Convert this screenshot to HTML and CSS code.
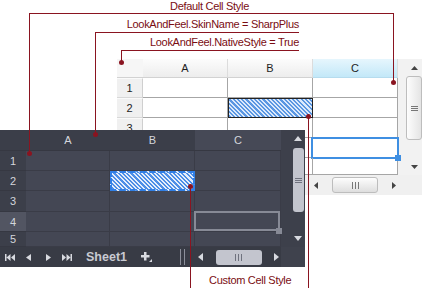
FILE: index.html
```html
<!DOCTYPE html>
<html lang="en">
<head>
    <meta charset="UTF-8">
    <title>Spreadsheet LookAndFeel</title>
    <link rel="stylesheet" href="styles.css">
</head>
<body>

<div class="canvas">

    <!-- native style sheet, in the back -->
    <div class="sheet light">
        <div class="hd corner"></div>
        <div class="hd">A</div>
        <div class="hd">B</div>
        <div class="hd active">C</div>
        <div class="vscroll">
            <svg class="arr" width="7" height="4" viewBox="0 0 7 4"><path d="M0 4L3.5 0L7 4z"/></svg>
            <div class="thumb"><span class="grip-v"></span></div>
            <svg class="arr down" width="7" height="4" viewBox="0 0 7 4"><path d="M0 0L7 0L3.5 4z"/></svg>
        </div>

        <div class="rh">1</div><div class="cell"></div><div class="cell"></div><div class="cell"></div>
        <div class="rh">2</div><div class="cell"></div><div class="cell hatch"></div><div class="cell"></div>
        <div class="rh">3</div><div class="cell"></div><div class="cell"></div><div class="cell"></div>
        <div class="rh">4</div><div class="cell"></div><div class="cell"></div><div class="cell focus"></div>
        <div class="rh">5</div><div class="cell"></div><div class="cell"></div><div class="cell"></div>

        <div class="foot">
            <div class="tabs"></div>
            <div class="hscroll">
                <svg class="arr" width="4" height="7" viewBox="0 0 4 7"><path d="M4 0L0 3.5L4 7z"/></svg>
                <div class="thumb"><span class="grip-h"></span></div>
                <svg class="arr" width="4" height="7" viewBox="0 0 4 7"><path d="M0 0L4 3.5L0 7z"/></svg>
            </div>
        </div>
        <div class="box"></div>
    </div>

    <!-- SharpPlus skin sheet, in front -->
    <div class="sheet dark">
        <div class="hd corner"></div>
        <div class="hd">A</div>
        <div class="hd">B</div>
        <div class="hd active">C</div>
        <div class="vscroll">
            <svg class="arr" width="8" height="5" viewBox="0 0 8 5"><path d="M0 5L4 0L8 5z"/></svg>
            <div class="thumb"><span class="grip-v"></span></div>
            <svg class="arr down" width="8" height="5" viewBox="0 0 8 5"><path d="M0 0L8 0L4 5z"/></svg>
        </div>

        <div class="rh">1</div><div class="cell"></div><div class="cell"></div><div class="cell"></div>
        <div class="rh">2</div><div class="cell"></div><div class="cell hatch"></div><div class="cell"></div>
        <div class="rh">3</div><div class="cell"></div><div class="cell"></div><div class="cell"></div>
        <div class="rh active">4</div><div class="cell"></div><div class="cell"></div><div class="cell focus"></div>
        <div class="rh">5</div><div class="cell"></div><div class="cell"></div><div class="cell"></div>

        <div class="foot">
            <div class="tabs">
                <svg class="nav" width="10" height="7" viewBox="0 0 10 7"><path d="M0 0h1.5v7H0zM5.5 0v7L1.5 3.5zM10 0v7L6 3.5z"/></svg>
                <svg class="nav" width="5" height="7" viewBox="0 0 5 7"><path d="M5 0v7L0 3.5z"/></svg>
                <svg class="nav" width="5" height="7" viewBox="0 0 5 7"><path d="M0 0v7L5 3.5z"/></svg>
                <svg class="nav" width="10" height="7" viewBox="0 0 10 7"><path d="M0 0v7L4 3.5zM4.5 0v7L8.5 3.5zM8.5 0H10v7H8.5z"/></svg>
                <span class="tab">Sheet1</span>
                <svg class="add" width="11" height="10" viewBox="0 0 11 10"><path d="M3 0h2.5v3h3v2.5h-3v3H3v-3H0V3h3z"/><path d="M8 10h3V7z"/></svg>
            </div>
            <div class="split"></div>
            <div class="hscroll">
                <svg class="arr" width="5" height="8" viewBox="0 0 5 8"><path d="M5 0L0 4L5 8z"/></svg>
                <div class="thumb"><span class="grip-h"></span></div>
                <svg class="arr" width="5" height="8" viewBox="0 0 5 8"><path d="M0 0L5 4L0 8z"/></svg>
            </div>
        </div>
        <div class="box"></div>
    </div>

    <!-- callouts -->
    <div class="note n-default">Default Cell Style</div>
    <div class="ln l-def-top"></div>
    <div class="ln l-def-left"></div>
    <div class="ln l-def-right"></div>
    <div class="dot d-def-left"></div>
    <div class="dot d-def-right"></div>

    <div class="note under n-skin">LookAndFeel.SkinName = SharpPlus</div>
    <div class="ln l-skin"></div>
    <div class="dot d-skin"></div>

    <div class="note under n-native">LookAndFeel.NativeStyle = True</div>
    <div class="ln l-native"></div>
    <div class="dot d-native"></div>

    <div class="note n-custom">Custom Cell Style</div>
    <div class="ln l-cus-left"></div>
    <div class="ln l-cus-right"></div>
    <div class="dot d-cus-left"></div>
    <div class="dot d-cus-right"></div>

</div>

</body>
</html>
```

FILE: styles.css
```css
* {
    box-sizing: border-box;
}
body {
    margin: 0;
    background: #fff;
    font-family: 'Liberation Sans', Arial, sans-serif;
}
.canvas {
    position: relative;
    width: 422px;
    height: 288px;
    overflow: hidden;
}

/* sheets */
.sheet {
    position: absolute;
    display: grid;
    font-size: 11px;
}
.hd, .rh {
    display: flex;
    align-items: center;
    justify-content: center;
}
.cell {
    position: relative;
}
.foot {
    grid-row: 7;
    grid-column: 1 / 5;
    display: flex;
}
.box {
    grid-row: 7;
    grid-column: 5;
}
.tabs {
    flex: 1;
    display: flex;
    align-items: center;
}
.hscroll {
    display: flex;
    align-items: center;
    justify-content: space-between;
}
.vscroll {
    grid-row: 1 / 7;
    grid-column: 5;
    display: flex;
    flex-direction: column;
    align-items: center;
}
.vscroll .down {
    margin-top: auto;
}
.thumb {
    display: flex;
    align-items: center;
    justify-content: center;
}

/* light / native */
.light {
    left: 117px;
    top: 59px;
    grid-template-columns: 26px 85px 85px 85px 32px;
    grid-template-rows: 19px 20px 20px 20px 20px 17px 20px;
    background: #fff;
    color: #1e1e1e;
}
.light .hd {
    background: linear-gradient(#fcfcfc, #ededed);
    border-right: 1px solid #dcdcdc;
    border-bottom: 1px solid #d2d2d2;
}
.light .hd.active {
    background: linear-gradient(#e6f6fd, #c3e8f8);
    border-bottom-color: #b6dcee;
}
.light .corner {
    background: #f6f6f6;
    border-right: none;
}
.light .rh {
    background: #f0f0f0;
    border-bottom: 1px solid #d8d8d8;
    border-top: 1px solid #fafafa;
    border-right: 1px solid #cfcfcf;
}
.light .cell {
    border-right: 1px solid #a6a6a6;
    border-bottom: 1px solid #a6a6a6;
}
.light .hatch {
    background: repeating-linear-gradient(45deg, #5a97e2 0 1.5px, #dbe9fb 1.5px 3px);
    border: 1px solid #222;
}
.light .focus::after {
    content: '';
    position: absolute;
    left: -2px;
    top: -1px;
    right: -2px;
    bottom: -2px;
    border: 2px solid #3f8fe2;
}
.light .focus::before {
    content: '';
    position: absolute;
    right: -4px;
    bottom: -4px;
    width: 6px;
    height: 6px;
    background: #3f8fe2;
    z-index: 1;
}
.light .vscroll {
    background: #f2f2f2;
    padding: 7px 0 6px;
}
.light .arr {
    fill: #444;
}
.light .vscroll .thumb {
    width: 16px;
    height: 64px;
    margin-top: 6px;
    border: 1px solid #bdbdbd;
    border-radius: 3px;
    background: linear-gradient(90deg, #fdfdfd, #e4e4e4);
}
.grip-v {
    width: 7px;
    height: 5px;
    border-top: 1px solid #777;
    border-bottom: 1px solid #777;
    position: relative;
}
.grip-v::after {
    content: '';
    position: absolute;
    left: 0;
    right: 0;
    top: 1px;
    border-top: 1px solid #777;
}
.grip-h {
    width: 7px;
    height: 7px;
    border-left: 1px solid #777;
    border-right: 1px solid #777;
    position: relative;
}
.grip-h::after {
    content: '';
    position: absolute;
    top: 0;
    bottom: 0;
    left: 2px;
    border-left: 1px solid #777;
}
.light .foot {
    background: #f0f0f0;
}
.light .hscroll {
    width: 89px;
    padding: 0 2px 0 5px;
}
.light .hscroll .thumb {
    width: 46px;
    height: 16px;
    border: 1px solid #bdbdbd;
    border-radius: 3px;
    background: linear-gradient(#fdfdfd, #dedede);
}
.light .box {
    background: #f0f0f0;
}

/* dark / SharpPlus */
.dark {
    left: 0;
    top: 130px;
    grid-template-columns: 26px 84px 85px 86px 24px;
    grid-template-rows: 21px 20px 20px 21px 20px 15px 20px;
    background: #444754;
    color: #d4d6dc;
}
.dark .hd {
    background: #3b3e49;
    border-bottom: 1px solid #363842;
}
.dark .hd.active {
    background: #464956;
}
.dark .rh {
    background: #3c3f4a;
    border-bottom: 1px solid #363842;
}
.dark .rh.active {
    background: #525562;
}
.dark .cell {
    border-right: 1px solid #3a3c47;
    border-bottom: 1px solid #3a3c47;
}
.dark .hatch {
    background: repeating-linear-gradient(45deg, #4d8ee6 0 1.5px, #e4eefb 1.5px 3px);
    border: 2px dashed #2f7fe6;
}
.dark .focus::after {
    content: '';
    position: absolute;
    left: -1px;
    top: -1px;
    right: 0;
    bottom: 0;
    border: 2px solid #878a96;
}
.dark .focus::before {
    content: '';
    position: absolute;
    right: -2px;
    bottom: -3px;
    width: 6px;
    height: 6px;
    background: #878a96;
    z-index: 1;
}
.dark .vscroll {
    background: #3d404b;
    padding: 6px 0 6px 10px;
}
.dark .arr {
    fill: #d8dae0;
}
.dark .vscroll .thumb {
    width: 11px;
    height: 64px;
    margin-top: 7px;
    border-radius: 3px;
    background: #c3c5ce;
}
.dark .grip-v, .dark .grip-v::after,
.dark .grip-h, .dark .grip-h::after {
    border-color: #6f727e;
}
.dark .foot {
    background: #383b45;
}
.dark .tabs {
    padding-left: 5px;
}
.dark .nav {
    fill: #d8dae0;
    margin-right: 11px;
}
.dark .nav:nth-child(2) {
    margin-right: 15px;
}
.dark .tab {
    font-size: 12.5px;
    font-weight: bold;
    color: #c8cad2;
    margin-left: 3px;
    margin-right: 14px;
}
.dark .add {
    fill: #d8dae0;
}
.split {
    width: 5px;
    margin: 2px 4px 2px 0;
    border-left: 1px solid #8c8f9a;
    border-right: 1px solid #8c8f9a;
}
.dark .hscroll {
    width: 92px;
    padding: 0 2px 0 9px;
}
.dark .hscroll .thumb {
    width: 46px;
    height: 15px;
    border-radius: 3px;
    background: #c3c5ce;
}
.dark .box {
    background: #3f424d;
}

/* callouts */
.note {
    position: absolute;
    font-size: 11px;
    line-height: 14px;
    letter-spacing: -0.3px;
    color: #7a0d12;
    white-space: nowrap;
}
.note.under {
    height: 16px;
    border-bottom: 1px solid #8a1420;
    text-align: right;
}
.ln {
    position: absolute;
    background: #8a1420;
    width: 1px;
}
.dot {
    position: absolute;
    width: 5px;
    height: 5px;
    border-radius: 50%;
    background: #8a1420;
}
.n-default {
    left: 170px;
    top: -1px;
}
.l-def-top {
    left: 29px;
    top: 13px;
    width: 365px;
    height: 1px;
}
.l-def-left {
    left: 29px;
    top: 13px;
    height: 141px;
}
.l-def-right {
    left: 393px;
    top: 13px;
    height: 69px;
}
.d-def-left {
    left: 27px;
    top: 151px;
}
.d-def-right {
    left: 391px;
    top: 80px;
}
.n-skin {
    left: 95px;
    top: 17px;
    width: 204px;
}
.l-skin {
    left: 95px;
    top: 32px;
    height: 102px;
}
.d-skin {
    left: 93px;
    top: 132px;
}
.n-native {
    left: 121px;
    top: 35px;
    width: 178px;
}
.l-native {
    left: 121px;
    top: 50px;
    height: 12px;
}
.d-native {
    left: 119px;
    top: 60px;
}
.n-custom {
    left: 209px;
    top: 273px;
}
.l-cus-left {
    left: 190px;
    top: 186px;
    height: 102px;
}
.l-cus-right {
    left: 308px;
    top: 116px;
    height: 172px;
}
.d-cus-left {
    left: 188px;
    top: 184px;
}
.d-cus-right {
    left: 306px;
    top: 114px;
}
```
